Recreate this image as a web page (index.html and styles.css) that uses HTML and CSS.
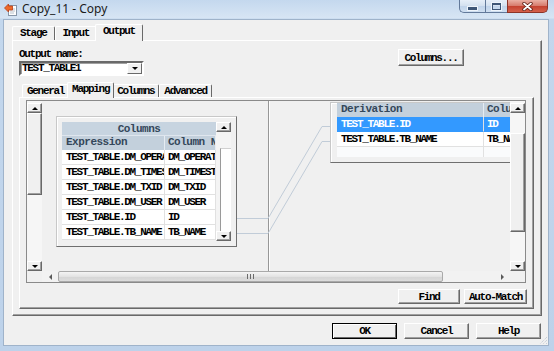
FILE: index.html
```html
<!DOCTYPE html>
<html>
<head>
  <title>Copy_11 - Copy</title>
  <link rel="stylesheet" href="styles.css">
</head>
<body>
  <div class="window">
    <div class="titlebar">
      <svg class="app-icon" width="14" height="13" viewBox="0 0 14 13">
        <rect x="4.5" y="2.5" width="8" height="10" fill="#fdfdfd" stroke="#8796a8"/>
        <path d="M6 6h5M6 8h5M6 10h4" stroke="#b8c2cc"/>
        <path d="M0.5 5 L4.5 1 L4.5 3 L8.5 3 L8.5 7 L4.5 7 L4.5 9 Z" fill="#ee6a2a" stroke="#b8401a" stroke-width="0.8"/>
      </svg>
      <span class="title">Copy_11 - Copy</span>
      <div class="captions">
        <div class="cap min"><span class="glyph-min"></span></div>
        <div class="cap max"><span class="glyph-max"></span></div>
        <div class="cap close">
          <svg width="11" height="9" viewBox="0 0 11 9">
            <path d="M2 1.5 L9 7.5 M9 1.5 L2 7.5" stroke="#5a1a10" stroke-width="3.4" stroke-linecap="round"/>
            <path d="M2 1.5 L9 7.5 M9 1.5 L2 7.5" stroke="#fff" stroke-width="1.8" stroke-linecap="round"/>
          </svg>
        </div>
      </div>
    </div>

    <div class="client">
      <div class="tabs outer-tabs">
        <div class="tab">Stage</div>
        <div class="tab">Input</div>
        <div class="tab active">Output</div>
      </div>

      <div class="panel outer-panel">
        <div class="output-head">
          <div class="output-name">
            <label>Output name:</label>
            <div class="combo">
              <span class="combo-text">TEST_TABLE1</span>
              <div class="combo-btn"><span class="tri-down"></span></div>
            </div>
          </div>
          <button class="btn columns-btn">Columns...</button>
        </div>

        <div class="tabs inner-tabs">
          <div class="tab">General</div>
          <div class="tab active">Mapping</div>
          <div class="tab">Columns</div>
          <div class="tab">Advanced</div>
        </div>

        <div class="panel inner-panel">
          <div class="mapping">
            <div class="vscroll">
              <div class="sb-btn"><span class="tri-up"></span></div>
              <div class="sb-thumb left-thumb"></div>
              <div class="sb-track"></div>
              <div class="sb-btn"><span class="tri-down"></span></div>
            </div>

            <div class="pane">
              <div class="card cols-card">
                <div class="grid-table">
                  <div class="caption-row">Columns</div>
                  <div class="row head-row"><div class="cell">Expression</div><div class="cell">Column Name</div></div>
                  <div class="row"><div class="cell">TEST_TABLE.DM_OPERATION</div><div class="cell">DM_OPERATION</div></div>
                  <div class="row"><div class="cell">TEST_TABLE.DM_TIMESTAMP</div><div class="cell">DM_TIMESTAMP</div></div>
                  <div class="row"><div class="cell">TEST_TABLE.DM_TXID</div><div class="cell">DM_TXID</div></div>
                  <div class="row"><div class="cell">TEST_TABLE.DM_USER</div><div class="cell">DM_USER</div></div>
                  <div class="row"><div class="cell">TEST_TABLE.ID</div><div class="cell">ID</div></div>
                  <div class="row"><div class="cell">TEST_TABLE.TB_NAME</div><div class="cell">TB_NAME</div></div>
                </div>
                <div class="vscroll card-scroll">
                  <div class="sb-btn"><span class="tri-up"></span></div>
                  <div class="sb-gap"></div>
                  <div class="sb-white"></div>
                  <div class="sb-btn"><span class="tri-down"></span></div>
                </div>
              </div>
            </div>

            <div class="divider"></div>

            <div class="pane">
              <div class="card deriv-card">
                <div class="grid-table deriv-table">
                  <div class="row head-row"><div class="cell">Derivation</div><div class="cell">Column Name</div></div>
                  <div class="row selected"><div class="cell">TEST_TABLE.ID</div><div class="cell">ID</div></div>
                  <div class="row"><div class="cell">TEST_TABLE.TB_NAME</div><div class="cell">TB_NAME</div></div>
                  <div class="row empty-row"><div class="cell"></div><div class="cell"></div></div>
                </div>
              </div>
            </div>

            <div class="vscroll">
              <div class="sb-btn"><span class="tri-up"></span></div>
              <div class="sb-track top-track"></div>
              <div class="sb-thumb right-thumb"></div>
              <div class="sb-track"></div>
              <div class="sb-btn"><span class="tri-down"></span></div>
            </div>

            <div class="corner"></div>
            <div class="hscroll">
              <div class="hs-arrow"><span class="tri-left"></span></div>
              <div class="hs-thumb"><span class="grip"></span></div>
              <div class="hs-track"></div>
              <div class="hs-arrow"><span class="tri-right"></span></div>
            </div>
            <div class="corner"></div>

            <svg class="links" width="498" height="181" viewBox="0 0 498 181">
              <polyline points="210,117.5 241,117.5 295,25.5 303,25.5" />
              <polyline points="210,132.5 241,132.5 295,40.5 303,40.5" />
            </svg>
          </div>

          <div class="button-row">
            <button class="btn find-btn">Find</button>
            <button class="btn match-btn">Auto-Match</button>
          </div>
        </div>
      </div>

      <div class="dialog-buttons">
        <button class="btn dlg-btn default">OK</button>
        <button class="btn dlg-btn">Cancel</button>
        <button class="btn dlg-btn">Help</button>
      </div>

      <svg class="grip-corner" width="9" height="9" viewBox="0 0 9 9">
        <path d="M8 1 L1 8 M8 4 L4 8 M8 7 L7 8" stroke="#b9c3cf" stroke-dasharray="1 1"/>
      </svg>
    </div>
  </div>
</body>
</html>
```

FILE: styles.css
```css
* {
  box-sizing: border-box;
}

body {
  margin: 0;
  background: #fff;
}

/* window frame */
.window {
  width: 554px;
  height: 351px;
  padding: 0 5px 5px 3px;
  display: flex;
  flex-direction: column;
  overflow: hidden;
  background: linear-gradient(#c4d8ee, #d7e5f4 18px, #c3d7ed 19px, #bdd2ea);
}

.titlebar {
  height: 19px;
  flex-shrink: 0;
  display: flex;
  align-items: flex-start;
}

.app-icon {
  margin: 3px 0 0 1px;
}

.title {
  margin: 1px 0 0 4px;
  font-family: "Noto Sans", "Liberation Sans", sans-serif;
  font-size: 12px;
  line-height: 16px;
  color: #1b1b1b;
}

.captions {
  display: flex;
  margin: 0 1px 0 auto;
}

.cap {
  height: 13px;
  border: 1px solid #62799a;
  border-top: none;
  display: flex;
  align-items: center;
  justify-content: center;
  background: linear-gradient(#e6eef8, #d3e0ef 50%, #c0d3ea 51%, #cfdff1);
}

.cap.min {
  width: 26px;
  border-right: none;
  border-radius: 0 0 0 5px;
}

.cap.max {
  width: 22px;
  border-right: none;
}

.cap.close {
  width: 41px;
  border-color: #8d3428;
  border-radius: 0 0 5px 0;
  background: linear-gradient(#eab0a4, #d6796a 50%, #c4412f 51%, #d5614c);
}

.glyph-min {
  width: 9px;
  height: 3px;
  margin-top: 5px;
  background: #3d5576;
  box-shadow: 0 0 0 1px #eef4fb;
}

.glyph-max {
  width: 9px;
  height: 7px;
  margin-top: 1px;
  border: 1px solid #3d5576;
  border-top-width: 2px;
  box-shadow: 0 0 0 1px #eef4fb;
}

/* dialog body */
.client {
  position: relative;
  flex: 1;
  background: #f0f0f0;
  border: 1px solid #9fb3ca;
  font-family: "Liberation Mono", "DejaVu Sans Mono", monospace;
  font-size: 11px;
  font-weight: bold;
  letter-spacing: -1.3px;
  color: #000;
}

.tabs {
  position: relative;
  z-index: 1;
  display: flex;
  align-items: flex-end;
}

.tab {
  height: 14px;
  line-height: 13px;
  padding: 0 7px;
  border: 1px solid;
  border-bottom: none;
  border-color: #fff #696969 #fff #fff;
  border-radius: 2px 2px 0 0;
  white-space: nowrap;
}

.tab.active {
  height: 17px;
  margin: 0 -2px -1px;
  background: #f0f0f0;
  position: relative;
}

.outer-tabs {
  height: 16px;
  margin: 4px 0 0 8px;
}

.inner-tabs {
  height: 15px;
  margin-top: 6px;
  padding-left: 3px;
}

.inner-tabs .tab {
  height: 13px;
  padding: 0 4px;
}

.inner-tabs .tab.active {
  height: 16px;
}

.panel {
  border: 1px solid;
  border-color: #fff #696969 #696969 #fff;
  box-shadow: inset -1px -1px #a0a0a0;
}

.outer-panel {
  width: 530px;
  height: 276px;
  margin-left: 8px;
  padding: 7px 0 0 6px;
}

.output-head {
  display: flex;
  align-items: flex-start;
}

.output-name label {
  display: block;
  height: 12px;
  line-height: 12px;
}

.combo {
  width: 125px;
  height: 15px;
  margin-top: 1px;
  display: flex;
  background: #fff;
  border: 2px solid;
  border-color: #696969 #fff #fff #696969;
  box-shadow: inset 1px 1px #a0a0a0;
}

.combo-text {
  flex: 1;
  padding-left: 1px;
  line-height: 11px;
}

.combo-btn {
  width: 15px;
  height: 11px;
  display: flex;
  align-items: center;
  justify-content: center;
  background: #f0f0f0;
  border: 1px solid;
  border-color: #fff #696969 #696969 #fff;
}

.btn {
  display: flex;
  align-items: center;
  justify-content: center;
  padding: 0;
  background: #f0f0f0;
  border: 1px solid;
  border-color: #fff #696969 #696969 #fff;
  box-shadow: inset -1px -1px #a0a0a0;
  font: inherit;
  letter-spacing: inherit;
  color: #000;
}

.columns-btn {
  width: 66px;
  height: 17px;
  margin: 1px 77px 0 auto;
}

.inner-panel {
  width: 515px;
  height: 212px;
  padding: 2px 0 0 6px;
}

/* mapping canvas */
.mapping {
  position: relative;
  width: 500px;
  height: 183px;
  display: grid;
  grid-template-columns: 15px 226px 2px 240px 15px;
  grid-template-rows: 170px 11px;
  border: 1px solid #8a8a8a;
}

.pane {
  overflow: hidden;
  background: #f0f0f0;
}

.divider {
  background: linear-gradient(90deg, #979797 50%, #fdfdfd 50%);
}

.corner {
  background: #f0f0f0;
}

.vscroll {
  display: flex;
  flex-direction: column;
  padding-top: 2px;
  background: #f6f6f6;
}

.sb-btn {
  height: 10px;
  flex-shrink: 0;
  display: flex;
  align-items: center;
  justify-content: center;
  background: #f0f0f0;
  border: 1px solid;
  border-color: #fff #696969 #696969 #fff;
  box-shadow: inset -1px -1px #a0a0a0;
}

.sb-thumb {
  background: #f0f0f0;
  border: 1px solid;
  border-color: #fff #696969 #696969 #fff;
  box-shadow: inset -1px -1px #a0a0a0;
}

.left-thumb {
  height: 82px;
}

.right-thumb {
  height: 99px;
}

.sb-track {
  flex: 1;
}

.top-track {
  flex: 0 0 20px;
}

.tri-up,
.tri-down,
.tri-left,
.tri-right {
  width: 0;
  height: 0;
  border: 3px solid transparent;
}

.tri-up {
  border-top: none;
  border-bottom: 3px solid #000;
}

.tri-down {
  border-bottom: none;
  border-top: 3px solid #000;
}

.tri-left {
  border-left: none;
  border-right: 3px solid #5a5a5a;
}

.tri-right {
  border-right: none;
  border-left: 3px solid #5a5a5a;
}

.hscroll {
  grid-column: 2 / 5;
  display: flex;
  align-items: stretch;
  background: #f2f2f2;
}

.hs-arrow {
  width: 16px;
  display: flex;
  align-items: center;
  justify-content: center;
}

.hs-thumb {
  width: 385px;
  display: flex;
  align-items: center;
  justify-content: center;
  border: 1px solid #a9a9a9;
  border-radius: 2px;
  background: linear-gradient(#f4f4f4, #e3e3e3 50%, #d5d5d5 51%, #dcdcdc);
}

.grip {
  width: 7px;
  height: 5px;
  background: repeating-linear-gradient(90deg, #6a6a6a 0 1px, transparent 1px 3px);
}

.hs-track {
  flex: 1;
}

.links {
  position: absolute;
  top: 0;
  left: 0;
  pointer-events: none;
}

.links polyline {
  fill: none;
  stroke: #c1ccd8;
  stroke-width: 1;
}

/* floating tables */
.card {
  display: flex;
  background: #f0f0f0;
  border: 1px solid;
  border-color: #c8c8c8 #6f6f6f #6f6f6f #c8c8c8;
  box-shadow: inset 1px 1px #fff;
}

.cols-card {
  width: 181px;
  height: 131px;
  margin: 15px 0 0 14px;
  padding: 5px;
}

.card-scroll {
  width: 15px;
  padding-top: 0;
  background: #f4f4f4;
}

.sb-btn + .sb-gap {
  height: 16px;
}

.sb-white {
  flex: 1;
  margin-left: 4px;
  background: #fff;
  border-left: 1px solid #9a9a9a;
  border-top: 1px solid #d0d0d0;
}

.grid-table {
  width: 154px;
}

.caption-row {
  height: 14px;
  line-height: 14px;
  text-align: center;
  background: #c7d4e0;
  border-bottom: 1px solid #dfe6ee;
  color: #34475a;
  letter-spacing: -0.5px;
}

.row {
  display: grid;
  grid-template-columns: 103px 51px;
  height: 15px;
}

.cell {
  overflow: hidden;
  white-space: nowrap;
  padding-left: 4px;
  line-height: 14px;
  background: #fff;
  border-right: 1px solid #e1e1e1;
  border-bottom: 1px solid #e1e1e1;
}

.cell + .cell {
  padding-left: 3px;
}

.head-row {
  height: 14px;
}

.head-row .cell {
  background: #c3d0dc;
  color: #34475a;
  letter-spacing: -0.5px;
  line-height: 13px;
  border-right: 1px solid #e6ecf2;
  border-bottom: none;
}

.deriv-card {
  width: 262px;
  height: 61px;
  margin: 1px 0 0 60px;
  padding: 0 0 5px 6px;
}

.deriv-table {
  width: 250px;
}

.deriv-table .row {
  grid-template-columns: 147px 103px;
}

.deriv-table .row.selected .cell {
  background: #3399ff;
  color: #fff;
  border-color: #3399ff #e1e1e1 #3399ff #3399ff;
}

.deriv-table .empty-row {
  height: 10px;
}

.deriv-table .empty-row .cell {
  background: #fafbfc;
  border-bottom: none;
}

/* buttons */
.button-row {
  display: flex;
  justify-content: flex-end;
  gap: 4px;
  margin-top: 6px;
  padding-right: 6px;
}

.find-btn {
  width: 62px;
  height: 15px;
}

.match-btn {
  width: 63px;
  height: 15px;
}

.dialog-buttons {
  display: flex;
  justify-content: flex-end;
  gap: 7px;
  margin-top: 7px;
  padding-right: 7px;
}

.dlg-btn {
  width: 65px;
  height: 16px;
}

.dlg-btn.default {
  border-color: #000;
  box-shadow: inset 1px 1px #fff, inset -1px -1px #696969;
}

.grip-corner {
  position: absolute;
  right: 0;
  bottom: 0;
}
```
